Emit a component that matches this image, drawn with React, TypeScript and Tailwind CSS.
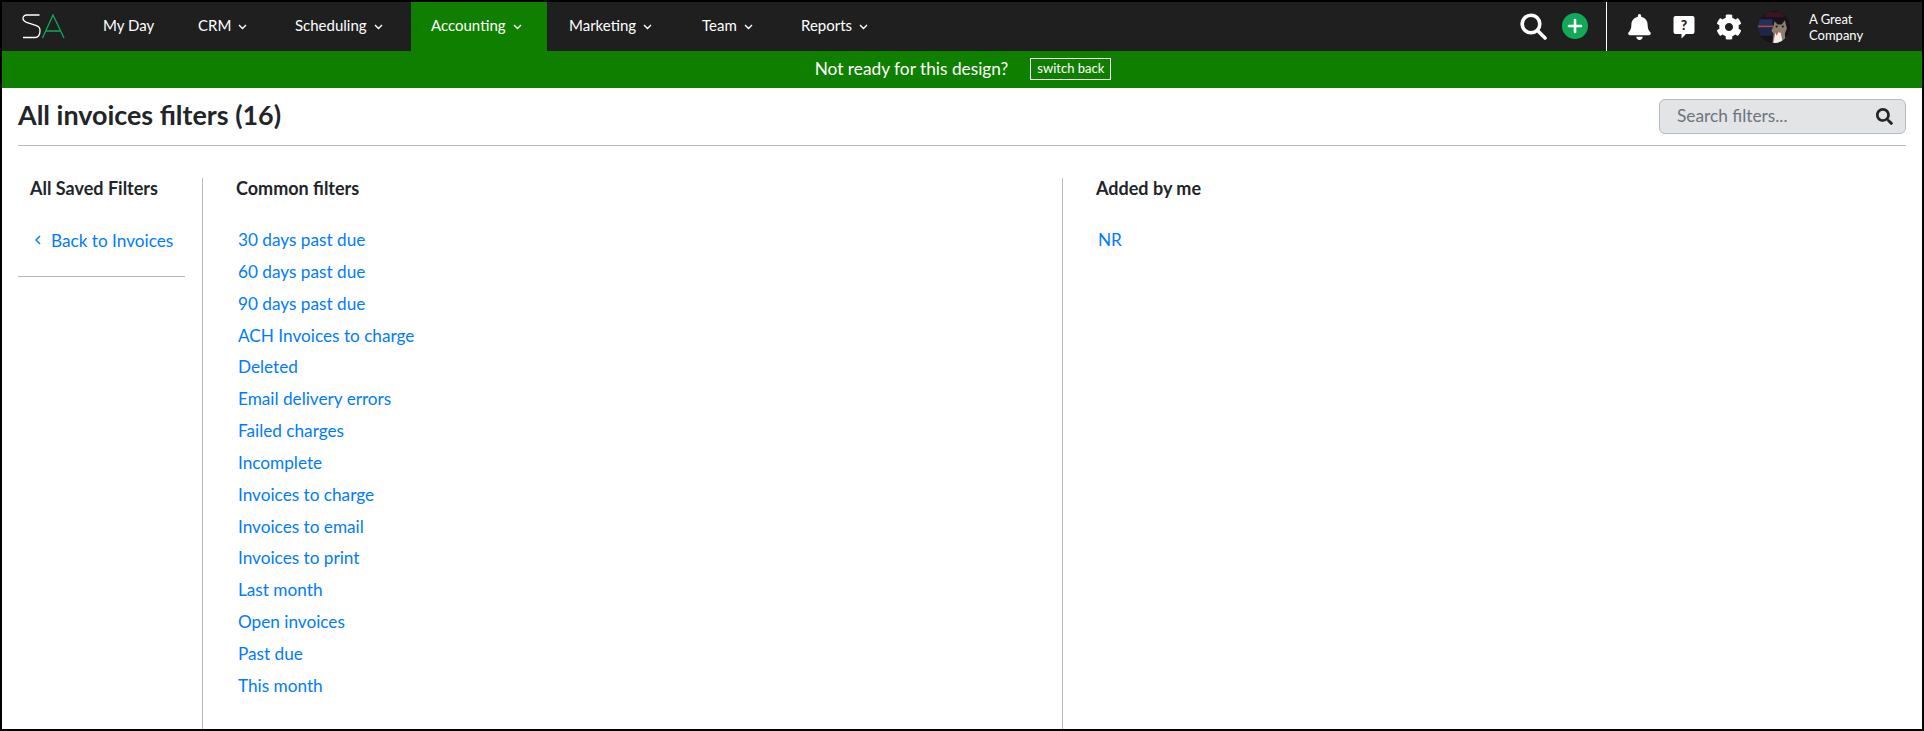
import React from "react";
import { FaBell, FaCog, FaSearch } from "react-icons/fa";

const navItems = [
  { label: "My Day", w: "w-[95px]", chevron: false },
  { label: "CRM", w: "w-[97px]", chevron: true },
  { label: "Scheduling", w: "w-[136px]", chevron: true },
  { label: "Accounting", w: "w-[136px]", chevron: true, active: true },
  { label: "Marketing", w: "w-[135px] pl-[22px]", chevron: true },
  { label: "Team", w: "w-[99px]", chevron: true },
  { label: "Reports", w: "w-[120px]", chevron: true },
];

const common = [
  "30 days past due",
  "60 days past due",
  "90 days past due",
  "ACH Invoices to charge",
  "Deleted",
  "Email delivery errors",
  "Failed charges",
  "Incomplete",
  "Invoices to charge",
  "Invoices to email",
  "Invoices to print",
  "Last month",
  "Open invoices",
  "Past due",
  "This month",
];

function Chevron() {
  return (
    <svg width="9" height="6" viewBox="0 0 9 6" className="ml-[7px] mt-[3px]" fill="none" stroke="currentColor" strokeWidth="1.4">
      <path d="M1 1l3.5 3.5L8 1" />
    </svg>
  );
}

function Logo() {
  return (
    <svg width="46" height="26" viewBox="0 0 46 26" fill="none" strokeWidth="1.3" className="shrink-0">
      <path d="M17.5 1H5Q1 1 1 4.5 1 7 4.5 8.3L14.5 11.7Q18 13 18 16.5 18 23.5 13 23.5H1" stroke="#fff" />
      <path d="M20.5 24L31 1l11 23M23.5 17H38.5" stroke="#12a85c" />
    </svg>
  );
}

function Avatar() {
  return (
    <svg width="32" height="32" viewBox="0 0 31 31" className="shrink-0">
      <defs>
        <clipPath id="av"><circle cx="15.5" cy="15.5" r="15.5" /></clipPath>
      </defs>
      <g clipPath="url(#av)">
        <rect width="31" height="31" fill="#1a1119" />
        <rect x="0" y="8" width="14" height="6" fill="#22305c" />
        <rect x="0" y="14" width="15" height="2" fill="#a8485a" />
        <rect x="0" y="16" width="14" height="8" fill="#1d2748" />
        <rect x="7" y="1" width="18" height="5" fill="#3a1526" />
        <path d="M15 15l1-5 3 3h4l3-4 2 8-2 5 1 9H14l1-9-2-3z" fill="#8a8070" />
        <path d="M15 31l2-11 5 1 2 10z" fill="#f4f0e8" />
        <path d="M16 19l4 1-2 4z" fill="#d8505a" />
        <circle cx="18" cy="15" r="1" fill="#14120f" />
        <circle cx="24" cy="15" r="1" fill="#14120f" />
      </g>
    </svg>
  );
}

export default function App() {
  return (
    <div className="h-[731px] w-full overflow-hidden border-2 border-black bg-white font-['Lato','Noto_Sans',sans-serif] text-[#212529]">
      <nav className="flex h-[49px] items-stretch bg-[#1f1f1f] text-white">
        <div className="flex w-[81px] items-center pl-[20px] pt-[1px]">
          <Logo />
        </div>
        <div className="flex items-stretch text-[15px]">
          {navItems.map((n) => (
            <div
              key={n.label}
              className={`flex items-center pb-[3px] pl-[20px] ${n.w} ${n.active ? "bg-[#0f7f00]" : ""}`}
            >
              <span>{n.label}</span>
              {n.chevron && <Chevron />}
            </div>
          ))}
        </div>
        <div className="ml-auto flex items-stretch">
          <div className="flex items-center gap-[15px] pb-[1px] pr-[18px]">
            <svg width="27" height="27" viewBox="0 0 27 27" fill="none" stroke="#fff" strokeWidth="3.6" strokeLinecap="round">
              <circle cx="11" cy="11" r="8.8" />
              <path d="M18 18l7 7" />
            </svg>
            <svg width="26" height="26" viewBox="0 0 26 26">
              <circle cx="13" cy="13" r="13" fill="#0fa958" />
              <path d="M13 7v12M7 13h12" stroke="#fff" strokeWidth="2.6" strokeLinecap="round" />
            </svg>
          </div>
          <div className="flex w-[316px] items-center border-l border-white pl-[21px]">
            <FaBell className="h-[26px] w-[23px] shrink-0" />
            <svg width="22" height="24" viewBox="0 0 22 24" className="ml-[22px] shrink-0">
              <path d="M2.500 1h17A2 2 0 0 1 21.500 3v14a2 2 0 0 1-2 2H13l-4.500 4.500V19h-6a2 2 0 0 1-2-2V3a2 2 0 0 1 2-2z" fill="#fff" />
              <text x="11" y="15" textAnchor="middle" fontSize="14" fontWeight="900" fill="#1f1f1f" fontFamily="Lato, sans-serif">?</text>
            </svg>
            <FaCog className="ml-[21px] h-[26px] w-[26px] shrink-0" />
            <div className="ml-[16px]"><Avatar /></div>
            <div className="ml-[19px] text-[13px] leading-[16px]">
              <div>A Great</div>
              <div>Company</div>
            </div>
          </div>
        </div>
      </nav>

      <div className="flex h-[37px] items-center justify-center bg-[#0f7f00] pb-[1px] pl-[2px] text-white">
        <span className="text-[17.3px]">Not ready for this design?</span>
        <span className="ml-[22px] flex h-[22px] w-[81px] items-center justify-center whitespace-nowrap border border-white text-[13px]">switch back</span>
      </div>

      <div className="mx-[16px] flex h-[58px] items-center justify-between border-b border-[#b4bbc2] pb-[3px]">
        <h1 className="mt-[1px] text-[26.9px] font-bold leading-none">All invoices filters (16)</h1>
        <div className="mt-[2px] flex h-[35px] w-[247px] items-center justify-between rounded-[6px] border border-[#b4bbc2] bg-[#e3e4e6] pl-[17px] pr-[12px]">
          <span className="text-[17.3px] text-[#6c757d]">Search filters...</span>
          <FaSearch className="h-[17px] w-[17px] text-[#212529]" />
        </div>
      </div>

      <div className="mx-[16px] mt-[32px] flex h-[551px] items-stretch">
        <aside className="w-[168px]">
          <h2 className="pl-[12px] text-[18px] font-bold leading-[20px]">All Saved Filters</h2>
          <a className="mt-[32px] flex h-[22px] items-center pl-[17px] text-[17.2px] text-[#007bff]">
            <svg width="6" height="10" viewBox="0 0 6 10" fill="none" stroke="currentColor" strokeWidth="1.500" className="mb-[3px] mr-[10px]">
              <path d="M5 1L1 5l4 4" />
            </svg>
            Back to Invoices
          </a>
          <div className="mt-[24px] h-px w-[167px] bg-[#b4bbc2]" />
        </aside>
        <section className="ml-[16px] w-[860px] border-l border-[#b4bbc2] pl-[33px]">
          <h2 className="text-[18px] font-bold leading-[20px]">Common filters</h2>
          <ul className="mt-[26px] pl-[2px] text-[17.2px] leading-[31.85px] text-[#007bff]">
            {common.map((c) => (
              <li key={c}><a>{c}</a></li>
            ))}
          </ul>
        </section>
        <section className="flex-1 border-l border-[#b4bbc2] pl-[33px]">
          <h2 className="text-[18px] font-bold leading-[20px]">Added by me</h2>
          <ul className="mt-[26px] pl-[2px] text-[17.2px] leading-[31.85px] text-[#007bff]">
            <li><a>NR</a></li>
          </ul>
        </section>
      </div>
    </div>
  );
}
